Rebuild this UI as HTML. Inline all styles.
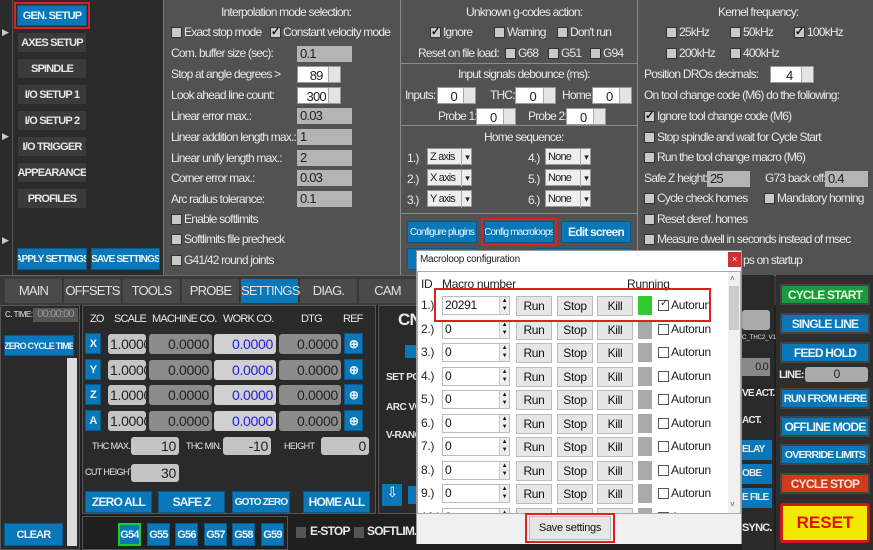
<!DOCTYPE html><html><head><style>
*{margin:0;padding:0;box-sizing:border-box}
body{width:873px;height:550px;overflow:hidden;background:#1f1f1f;font-family:"Liberation Sans",sans-serif;font-size:12px;letter-spacing:-0.8px;color:#e8e8e8;position:relative}
.a{position:absolute;white-space:nowrap}
.btn{position:absolute;background:#3b3b3b;color:#e6e6e6;text-align:center;font-weight:bold;border:1px solid #2a2a2a;display:flex;align-items:center;justify-content:center;font-size:11px;white-space:nowrap;overflow:hidden}
.blue{background:#0a78b8;color:#e8f4ff;border:1px solid #075a8a}
.cb{position:absolute;width:11px;height:11px;background:#c9c9c9;border:1px solid #333}
.cb.on::after{content:"✓";position:absolute;left:0;top:-3px;font-size:11px;color:#111;font-weight:bold}
.in{position:absolute;height:16px;background:#b4b4b4;color:#222;font-size:13px;padding-left:3px;line-height:16px}
.sp{position:absolute;height:17px;background:#fff;color:#222;font-size:13px;text-align:center;line-height:17px;border:1px solid #999}
.sp::after{content:"";position:absolute;right:0;top:0;width:11px;height:100%;background:#e4e4e4;border-left:1px solid #aaa}
.cmb{position:absolute;height:17px;background:#eee;color:#222;font-size:11px;padding-left:2px;line-height:17px;border:1px solid #999}
.cmb::after{content:"▾";position:absolute;right:2px;top:0;font-size:9px;border-left:1px solid #aaa;padding-left:3px}
.hl{position:absolute;height:1px;background:#8a8a8a}
.vl{position:absolute;width:1px;background:#8a8a8a}
.tab{position:absolute;top:279px;height:24px;background:#4a4a4a;color:#e0e0e0;font-size:13px;text-align:center;line-height:24px;border-right:1px solid #333;white-space:nowrap}
.dro{position:absolute;height:20px;border-radius:3px;font-size:14px;text-align:right;padding-right:3px;line-height:20px;color:#222;letter-spacing:-0.3px}
.rb{position:absolute;left:780px;width:90px;height:21px;font-size:12px;font-weight:bold;text-align:center;line-height:18px;border:2px solid #444;white-space:nowrap;overflow:hidden}
.db{position:absolute;height:20px;background:#e6e6e6;border:1px solid #bbb;color:#111;font-size:12px;text-align:center;line-height:18px}
.dcb{position:absolute;width:11px;height:11px;border:1px solid #555;background:#fff}
#dlg{letter-spacing:-0.3px}
.hd{font-size:11px}
</style></head><body>
<div class="a" style="left:0;top:0;width:163px;height:275px;background:#2b2b2b"></div>
<div class="a" style="left:164px;top:0;width:709px;height:275px;background:#525252"></div>
<div class="vl" style="left:12px;top:0;height:275px;background:#555"></div>
<div class="vl" style="left:163px;top:0;height:275px;background:#777"></div>
<div class="vl" style="left:400px;top:0;height:275px"></div>
<div class="vl" style="left:637px;top:0;height:275px"></div>
<div class="hl" style="left:400px;top:63px;width:237px"></div>
<div class="hl" style="left:400px;top:125px;width:237px"></div>
<div class="hl" style="left:400px;top:213px;width:237px"></div>
<div class="a" style="left:2px;top:27px;color:#ccc;font-size:9px">▶</div>
<div class="a" style="left:2px;top:131px;color:#ccc;font-size:9px">▶</div>
<div class="a" style="left:2px;top:235px;color:#ccc;font-size:9px">▶</div>
<div class="btn blue" style="left:17px;top:5px;width:70px;height:21px;outline:2px solid #e02020;outline-offset:1px">GEN. SETUP</div>
<div class="btn" style="left:17px;top:32px;width:70px;height:21px">AXES SETUP</div>
<div class="btn" style="left:17px;top:58px;width:70px;height:21px">SPINDLE</div>
<div class="btn" style="left:17px;top:84px;width:70px;height:21px">I/O SETUP 1</div>
<div class="btn" style="left:17px;top:110px;width:70px;height:21px">I/O SETUP 2</div>
<div class="btn" style="left:17px;top:136px;width:70px;height:21px">I/O TRIGGER</div>
<div class="btn" style="left:17px;top:162px;width:70px;height:21px">APPEARANCE</div>
<div class="btn" style="left:17px;top:188px;width:70px;height:21px">PROFILES</div>
<div class="btn blue" style="left:17px;top:248px;width:70px;height:22px;font-size:10px">APPLY SETTINGS</div>
<div class="btn blue" style="left:91px;top:248px;width:69px;height:22px;font-size:10px">SAVE SETTINGS</div>

<div class="a" style="left:221px;top:5px">Interpolation mode selection:</div>
<div class="cb" style="left:171px;top:27px"></div><div class="a" style="left:184px;top:25px">Exact stop mode</div>
<div class="cb on" style="left:270px;top:27px"></div><div class="a" style="left:283px;top:25px">Constant velocity mode</div>
<div class="a" style="left:171px;top:46px">Com. buffer size (sec):</div><div class="in" style="left:297px;top:46px;width:55px">0.1</div>
<div class="a" style="left:171px;top:67px">Stop at angle degrees &gt;</div><div class="sp" style="left:297px;top:66px;width:44px">89&nbsp;&nbsp;</div>
<div class="a" style="left:171px;top:88px">Look ahead line count:</div><div class="sp" style="left:297px;top:87px;width:44px">300&nbsp;&nbsp;</div>
<div class="a" style="left:171px;top:109px">Linear error max.:</div><div class="in" style="left:297px;top:108px;width:55px">0.03</div>
<div class="a" style="left:171px;top:130px">Linear addition length max.:</div><div class="in" style="left:297px;top:129px;width:55px">1</div>
<div class="a" style="left:171px;top:151px">Linear unify length max.:</div><div class="in" style="left:297px;top:150px;width:55px">2</div>
<div class="a" style="left:171px;top:171px">Corner error max.:</div><div class="in" style="left:297px;top:170px;width:55px">0.03</div>
<div class="a" style="left:171px;top:192px">Arc radius tolerance:</div><div class="in" style="left:297px;top:191px;width:55px">0.1</div>
<div class="cb" style="left:171px;top:214px"></div><div class="a" style="left:184px;top:212px">Enable softlimits</div>
<div class="cb" style="left:171px;top:234px"></div><div class="a" style="left:184px;top:232px">Softlimits file precheck</div>
<div class="cb" style="left:171px;top:255px"></div><div class="a" style="left:184px;top:253px">G41/42 round joints</div>

<div class="a" style="left:466px;top:5px">Unknown g-codes action:</div>
<div class="cb on" style="left:430px;top:27px"></div><div class="a" style="left:443px;top:25px">Ignore</div>
<div class="cb" style="left:494px;top:27px"></div><div class="a" style="left:507px;top:25px">Warning</div>
<div class="cb" style="left:557px;top:27px"></div><div class="a" style="left:570px;top:25px">Don't run</div>
<div class="a" style="left:418px;top:46px">Reset on file load:</div>
<div class="cb" style="left:505px;top:48px"></div><div class="a" style="left:518px;top:46px">G68</div>
<div class="cb" style="left:548px;top:48px"></div><div class="a" style="left:561px;top:46px">G51</div>
<div class="cb" style="left:590px;top:48px"></div><div class="a" style="left:603px;top:46px">G94</div>
<div class="a" style="left:458px;top:67px">Input signals debounce (ms):</div>
<div class="a" style="left:405px;top:88px">Inputs:</div><div class="sp" style="left:437px;top:87px;width:39px">0&nbsp;&nbsp;</div>
<div class="a" style="left:490px;top:88px">THC:</div><div class="sp" style="left:515px;top:87px;width:41px">0&nbsp;&nbsp;</div>
<div class="a" style="left:562px;top:88px">Home:</div><div class="sp" style="left:592px;top:87px;width:40px">0&nbsp;&nbsp;</div>
<div class="a" style="left:438px;top:109px">Probe 1:</div><div class="sp" style="left:476px;top:108px;width:40px">0&nbsp;&nbsp;</div>
<div class="a" style="left:528px;top:109px">Probe 2:</div><div class="sp" style="left:566px;top:108px;width:40px">0&nbsp;&nbsp;</div>
<div class="a" style="left:484px;top:130px">Home sequence:</div>
<div class="a" style="left:407px;top:151px">1.)</div><div class="cmb" style="left:427px;top:148px;width:45px">Z axis</div>
<div class="a" style="left:407px;top:172px">2.)</div><div class="cmb" style="left:427px;top:169px;width:45px">X axis</div>
<div class="a" style="left:407px;top:193px">3.)</div><div class="cmb" style="left:427px;top:190px;width:45px">Y axis</div>
<div class="a" style="left:528px;top:151px">4.)</div><div class="cmb" style="left:545px;top:148px;width:46px">None</div>
<div class="a" style="left:528px;top:172px">5.)</div><div class="cmb" style="left:545px;top:169px;width:46px">None</div>
<div class="a" style="left:528px;top:193px">6.)</div><div class="cmb" style="left:545px;top:190px;width:46px">None</div>
<div class="btn blue" style="left:407px;top:221px;width:70px;height:22px;font-size:10px;font-weight:normal">Configure plugins</div>
<div class="btn blue" style="left:484px;top:221px;width:70px;height:22px;font-size:10px;font-weight:normal;outline:2px solid #e02020;outline-offset:1px">Config macroloops</div>
<div class="btn blue" style="left:561px;top:221px;width:70px;height:22px;font-size:12px">Edit screen</div>
<div class="btn blue" style="left:407px;top:248px;width:70px;height:22px"></div>
<div class="btn blue" style="left:535px;top:248px;width:96px;height:22px"></div>

<div class="a" style="left:718px;top:5px">Kernel frequency:</div>
<div class="cb" style="left:666px;top:27px"></div><div class="a" style="left:679px;top:25px">25kHz</div>
<div class="cb" style="left:730px;top:27px"></div><div class="a" style="left:743px;top:25px">50kHz</div>
<div class="cb on" style="left:794px;top:27px"></div><div class="a" style="left:807px;top:25px">100kHz</div>
<div class="cb" style="left:666px;top:48px"></div><div class="a" style="left:679px;top:46px">200kHz</div>
<div class="cb" style="left:730px;top:48px"></div><div class="a" style="left:743px;top:46px">400kHz</div>
<div class="a" style="left:644px;top:67px">Position DROs decimals:</div><div class="sp" style="left:770px;top:66px;width:44px">4&nbsp;&nbsp;</div>
<div class="a" style="left:644px;top:88px">On tool change code (M6) do the following:</div>
<div class="cb on" style="left:644px;top:111px"></div><div class="a" style="left:657px;top:109px">Ignore tool change code (M6)</div>
<div class="cb" style="left:644px;top:132px"></div><div class="a" style="left:657px;top:130px">Stop spindle and wait for Cycle Start</div>
<div class="cb" style="left:644px;top:152px"></div><div class="a" style="left:657px;top:150px">Run the tool change macro (M6)</div>
<div class="a" style="left:644px;top:171px">Safe Z height:</div><div class="in" style="left:707px;top:171px;width:43px">25</div>
<div class="a" style="left:765px;top:171px">G73 back off:</div><div class="in" style="left:825px;top:171px;width:43px">0.4</div>
<div class="cb" style="left:644px;top:193px"></div><div class="a" style="left:657px;top:191px">Cycle check homes</div>
<div class="cb" style="left:764px;top:193px"></div><div class="a" style="left:777px;top:191px">Mandatory homing</div>
<div class="cb" style="left:644px;top:214px"></div><div class="a" style="left:657px;top:212px">Reset deref. homes</div>
<div class="cb" style="left:644px;top:234px"></div><div class="a" style="left:657px;top:232px">Measure dwell in seconds instead of msec</div>
<div class="a" style="left:743px;top:253px">ps on startup</div>

<div class="a" style="left:0;top:275px;width:873px;height:30px;background:#3a3a3a;border-top:1px solid #666"></div>
<div class="tab" style="left:5px;width:58px">MAIN</div>
<div class="tab" style="left:64px;width:58px">OFFSETS</div>
<div class="tab" style="left:123px;width:58px">TOOLS</div>
<div class="tab" style="left:182px;width:58px">PROBE</div>
<div class="tab" style="left:241px;width:58px;background:#0a78b8">SETTINGS</div>
<div class="tab" style="left:300px;width:58px">DIAG.</div>
<div class="tab" style="left:359px;width:58px">CAM</div>

<div class="a" style="left:0;top:305px;width:80px;height:245px;background:#2a2a2a;border:1px solid #555"></div>
<div class="a" style="left:5px;top:310px;font-size:8px;letter-spacing:-0.5px">C. TIME:</div>
<div class="a" style="left:33px;top:308px;width:45px;height:14px;background:#555;color:#999;font-size:11px;text-align:center">00:00:00</div>
<div class="btn blue" style="left:4px;top:335px;width:70px;height:21px;font-size:9px">ZERO CYCLE TIME</div>
<div class="a" style="left:67px;top:358px;width:10px;height:188px;background:#ddd"></div>
<div class="btn blue" style="left:4px;top:523px;width:59px;height:23px;font-size:11px">CLEAR</div>

<div class="a" style="left:82px;top:305px;width:294px;height:209px;background:#2a2a2a;border:1px solid #555"></div>
<div class="a hd" style="left:90px;top:313px">ZO</div>
<div class="a hd" style="left:114px;top:313px">SCALE</div>
<div class="a hd" style="left:152px;top:313px">MACHINE CO.</div>
<div class="a hd" style="left:223px;top:313px">WORK CO.</div>
<div class="a hd" style="left:301px;top:313px">DTG</div>
<div class="a hd" style="left:343px;top:313px">REF</div>
<div class="btn blue" style="left:85px;top:333px;width:16px;height:21px">X</div>
<div class="btn blue" style="left:85px;top:359px;width:16px;height:21px">Y</div>
<div class="btn blue" style="left:85px;top:384px;width:16px;height:21px">Z</div>
<div class="btn blue" style="left:85px;top:410px;width:16px;height:21px">A</div>
<div class="dro" style="left:108px;top:334px;width:38px;background:#c4c4c4;text-align:left;padding-left:2px;overflow:hidden">1.0000</div>
<div class="dro" style="left:108px;top:360px;width:38px;background:#c4c4c4;text-align:left;padding-left:2px;overflow:hidden">1.0000</div>
<div class="dro" style="left:108px;top:385px;width:38px;background:#c4c4c4;text-align:left;padding-left:2px;overflow:hidden">1.0000</div>
<div class="dro" style="left:108px;top:411px;width:38px;background:#c4c4c4;text-align:left;padding-left:2px;overflow:hidden">1.0000</div>
<div class="dro" style="left:149px;top:334px;width:63px;background:#8c8c8c">0.0000</div>
<div class="dro" style="left:149px;top:360px;width:63px;background:#8c8c8c">0.0000</div>
<div class="dro" style="left:149px;top:385px;width:63px;background:#8c8c8c">0.0000</div>
<div class="dro" style="left:149px;top:411px;width:63px;background:#8c8c8c">0.0000</div>
<div class="dro" style="left:214px;top:334px;width:62px;background:#d0d0d0;color:#2020e0">0.0000</div>
<div class="dro" style="left:214px;top:360px;width:62px;background:#d0d0d0;color:#2020e0">0.0000</div>
<div class="dro" style="left:214px;top:385px;width:62px;background:#d0d0d0;color:#2020e0">0.0000</div>
<div class="dro" style="left:214px;top:411px;width:62px;background:#d0d0d0;color:#2020e0">0.0000</div>
<div class="dro" style="left:279px;top:334px;width:62px;background:#8c8c8c">0.0000</div>
<div class="dro" style="left:279px;top:360px;width:62px;background:#8c8c8c">0.0000</div>
<div class="dro" style="left:279px;top:385px;width:62px;background:#8c8c8c">0.0000</div>
<div class="dro" style="left:279px;top:411px;width:62px;background:#8c8c8c">0.0000</div>
<div class="btn blue" style="left:344px;top:333px;width:19px;height:21px;font-size:12px">⊕</div>
<div class="btn blue" style="left:344px;top:359px;width:19px;height:21px;font-size:12px">⊕</div>
<div class="btn blue" style="left:344px;top:384px;width:19px;height:21px;font-size:12px">⊕</div>
<div class="btn blue" style="left:344px;top:410px;width:19px;height:21px;font-size:12px">⊕</div>
<div class="a" style="left:92px;top:441px;font-size:9px;letter-spacing:-0.6px">THC MAX.</div>
<div class="dro" style="left:131px;top:437px;width:48px;height:18px;background:#c4c4c4;line-height:18px">10</div>
<div class="a" style="left:186px;top:441px;font-size:9px;letter-spacing:-0.6px">THC MIN.</div>
<div class="dro" style="left:223px;top:437px;width:48px;height:18px;background:#c4c4c4;line-height:18px">-10</div>
<div class="a" style="left:284px;top:441px;font-size:9px;letter-spacing:-0.6px">HEIGHT</div>
<div class="dro" style="left:321px;top:437px;width:48px;height:18px;background:#c4c4c4;line-height:18px">0</div>
<div class="a" style="left:85px;top:467px;font-size:9px;letter-spacing:-0.6px">CUT HEIGHT</div>
<div class="dro" style="left:131px;top:464px;width:48px;height:18px;background:#c4c4c4;line-height:18px">30</div>
<div class="btn blue" style="left:85px;top:491px;width:67px;height:22px;font-size:12px">ZERO ALL</div>
<div class="btn blue" style="left:158px;top:491px;width:67px;height:22px;font-size:12px">SAFE Z</div>
<div class="btn blue" style="left:232px;top:491px;width:58px;height:22px;font-size:10px">GOTO ZERO</div>
<div class="btn blue" style="left:303px;top:491px;width:67px;height:22px;font-size:12px">HOME ALL</div>
<div class="a" style="left:82px;top:516px;width:206px;height:34px;border:1px solid #555"></div>
<div class="btn blue" style="left:118px;top:523px;width:23px;height:23px;border:2px solid #2c2">G54</div>
<div class="btn blue" style="left:147px;top:523px;width:23px;height:23px">G55</div>
<div class="btn blue" style="left:175px;top:523px;width:23px;height:23px">G56</div>
<div class="btn blue" style="left:204px;top:523px;width:23px;height:23px">G57</div>
<div class="btn blue" style="left:232px;top:523px;width:23px;height:23px">G58</div>
<div class="btn blue" style="left:261px;top:523px;width:23px;height:23px">G59</div>
<div class="a" style="left:296px;top:527px;width:10px;height:11px;background:#555"></div>
<div class="a" style="left:310px;top:524px;font-weight:bold">E-STOP</div>
<div class="a" style="left:354px;top:527px;width:10px;height:11px;background:#555"></div>
<div class="a" style="left:367px;top:524px;font-weight:bold">SOFTLIM.</div>
<div class="a" style="left:378px;top:305px;width:40px;height:209px;border:1px solid #555;background:#2a2a2a"></div>
<div class="a" style="left:398px;top:310px;font-size:17px;font-weight:bold">CN</div>
<div class="a" style="left:405px;top:345px;width:13px;height:13px;background:#0a78b8"></div>
<div class="a" style="left:386px;top:372px;font-size:10px;font-weight:bold;letter-spacing:-0.5px">SET PO</div>
<div class="a" style="left:386px;top:402px;font-size:10px;font-weight:bold;letter-spacing:-0.5px">ARC VO</div>
<div class="a" style="left:386px;top:430px;font-size:10px;font-weight:bold;letter-spacing:-0.5px">V-RANG</div>
<div class="a" style="left:382px;top:484px;width:20px;height:22px;background:#0a78b8;color:#fff;font-size:14px;text-align:center">⇩</div>
<div class="a" style="left:408px;top:486px;width:10px;height:18px;background:#0a78b8"></div>
<div class="a" style="left:742px;top:275px;width:32px;height:275px;background:#2a2a2a"></div>
<div class="a" style="left:742px;top:310px;width:28px;height:20px;background:#aaa;border-radius:3px"></div>
<div class="a" style="left:742px;top:335px;font-size:6px;letter-spacing:0">C_THC2_V1</div>
<div class="a" style="left:742px;top:358px;width:28px;height:18px;background:#888;color:#222;text-align:right;font-size:11px;padding-right:2px;line-height:18px">0.0</div>
<div class="a" style="left:742px;top:388px;font-size:10px;font-weight:bold">VE ACT.</div>
<div class="a" style="left:742px;top:415px;font-size:10px;font-weight:bold">ACT.</div>
<div class="a" style="left:742px;top:440px;width:30px;height:20px;background:#0a78b8;font-size:10px;line-height:20px;font-weight:bold">ELAY</div>
<div class="a" style="left:742px;top:464px;width:30px;height:20px;background:#0a78b8;font-size:10px;line-height:20px;font-weight:bold">OBE</div>
<div class="a" style="left:742px;top:488px;width:30px;height:20px;background:#0a78b8;font-size:10px;line-height:20px;font-weight:bold">E FILE</div>
<div class="a" style="left:742px;top:522px;font-size:11px;font-weight:bold">SYNC.</div>
<div class="a" style="left:776px;top:275px;width:97px;height:275px;background:#2e2e2e"></div>
<div class="rb" style="top:284px;background:#1a9a3a;color:#dfffe0">CYCLE START</div>
<div class="rb" style="top:313px;background:#0a78b8;color:#e8f4ff">SINGLE LINE</div>
<div class="rb" style="top:342px;background:#0a78b8;color:#e8f4ff">FEED HOLD</div>
<div class="a" style="left:779px;top:369px;font-size:11px;font-weight:bold">LINE:</div>
<div class="a" style="left:805px;top:367px;width:63px;height:15px;background:#aaa;color:#222;text-align:center;border-radius:3px;font-size:12px;line-height:15px">0</div>
<div class="rb" style="top:388px;background:#0a78b8;color:#e8f4ff;font-size:11px">RUN FROM HERE</div>
<div class="rb" style="top:416px;background:#0a78b8;color:#e8f4ff">OFFLINE MODE</div>
<div class="rb" style="top:444px;background:#0a78b8;color:#e8f4ff;font-size:10.5px">OVERRIDE LIMITS</div>
<div class="rb" style="top:473px;background:#d03a1a;color:#ffe0d8">CYCLE STOP</div>
<div class="a" style="left:780px;top:503px;width:90px;height:40px;background:#f2e800;border:3px solid #d01818;border-radius:3px;color:#e01010;font-size:17px;font-weight:bold;text-align:center;line-height:34px;letter-spacing:0">RESET</div>

<div id="dlg">
<div class="a" style="left:416px;top:250px;width:326px;height:294px;background:#f0f0f0;border:1px solid #999"></div>
<div class="a" style="left:417px;top:251px;width:324px;height:20px;background:#fff"></div>
<div class="a" style="left:420px;top:254px;font-size:10px;color:#222">Macroloop configuration</div>
<div class="a" style="left:728px;top:252px;width:13px;height:15px;background:#d03030;color:#fff;font-size:9px;text-align:center;line-height:15px">×</div>
<div class="a" style="left:417px;top:271px;width:324px;height:243px;background:#fff;border:1px solid #aaa;overflow:hidden" id="mrows"></div>
<div class="a" style="left:728px;top:272px;width:12px;height:241px;background:#f0f0f0"></div>
<div class="a" style="left:729px;top:286px;width:10px;height:44px;background:#ccc"></div>
<div class="a" style="left:730px;top:274px;font-size:8px;color:#555">˄</div>
<div class="a" style="left:730px;top:500px;font-size:8px;color:#555">˅</div>
<div class="a" style="left:417px;top:514px;width:324px;height:30px;background:#f0f0f0"></div>
<div class="db" style="left:529px;top:516px;width:82px;height:24px;line-height:22px;font-size:11px">Save settings</div>
<div class="a" style="left:525px;top:513px;width:90px;height:30px;border:2px solid #e02020"></div>
<div class="a" style="left:434px;top:288px;width:277px;height:34px;border:2px solid #e02020"></div>
</div>
<script>
var h='<div class="a" style="left:3px;top:5px;color:#222">ID</div><div class="a" style="left:24px;top:5px;color:#222">Macro number</div><div class="a" style="left:209px;top:5px;color:#222">Running</div>';
var names=['20291','0','0','0','0','0','0','0','0','0'];
for(var i=0;i<10;i++){var y=Math.round(24+i*23.5);
h+='<div class="a" style="left:3px;top:'+(y+2)+'px;color:#222">'+(i+1)+'.)</div>';
h+='<div class="a" style="left:24px;top:'+y+'px;width:68px;height:19px;border:1px solid #bbb;background:#fff;color:#111;padding-left:2px;line-height:17px">'+names[i]+'<span style="position:absolute;right:0;top:0;width:10px;height:17px;background:#eee;border-left:1px solid #ccc;font-size:6px;line-height:8px;text-align:center">▲<br>▼</span></div>';
h+='<div class="db" style="left:98px;top:'+y+'px;width:36px">Run</div>';
h+='<div class="db" style="left:139px;top:'+y+'px;width:36px">Stop</div>';
h+='<div class="db" style="left:179px;top:'+y+'px;width:36px">Kill</div>';
h+='<div class="a" style="left:220px;top:'+y+'px;width:14px;height:19px;background:'+(i==0?'#2ecc2e':'#aaa')+'"></div>';
h+='<div class="dcb" style="left:240px;top:'+(y+4)+'px">'+(i==0?'<span style="position:absolute;left:1px;top:-3px;font-size:10px;color:#333">✓</span>':'')+'</div>';
h+='<div class="a" style="left:253px;top:'+(y+2)+'px;color:#222">Autorun</div>';}
document.getElementById('mrows').innerHTML=h;
</script>
</body></html>
